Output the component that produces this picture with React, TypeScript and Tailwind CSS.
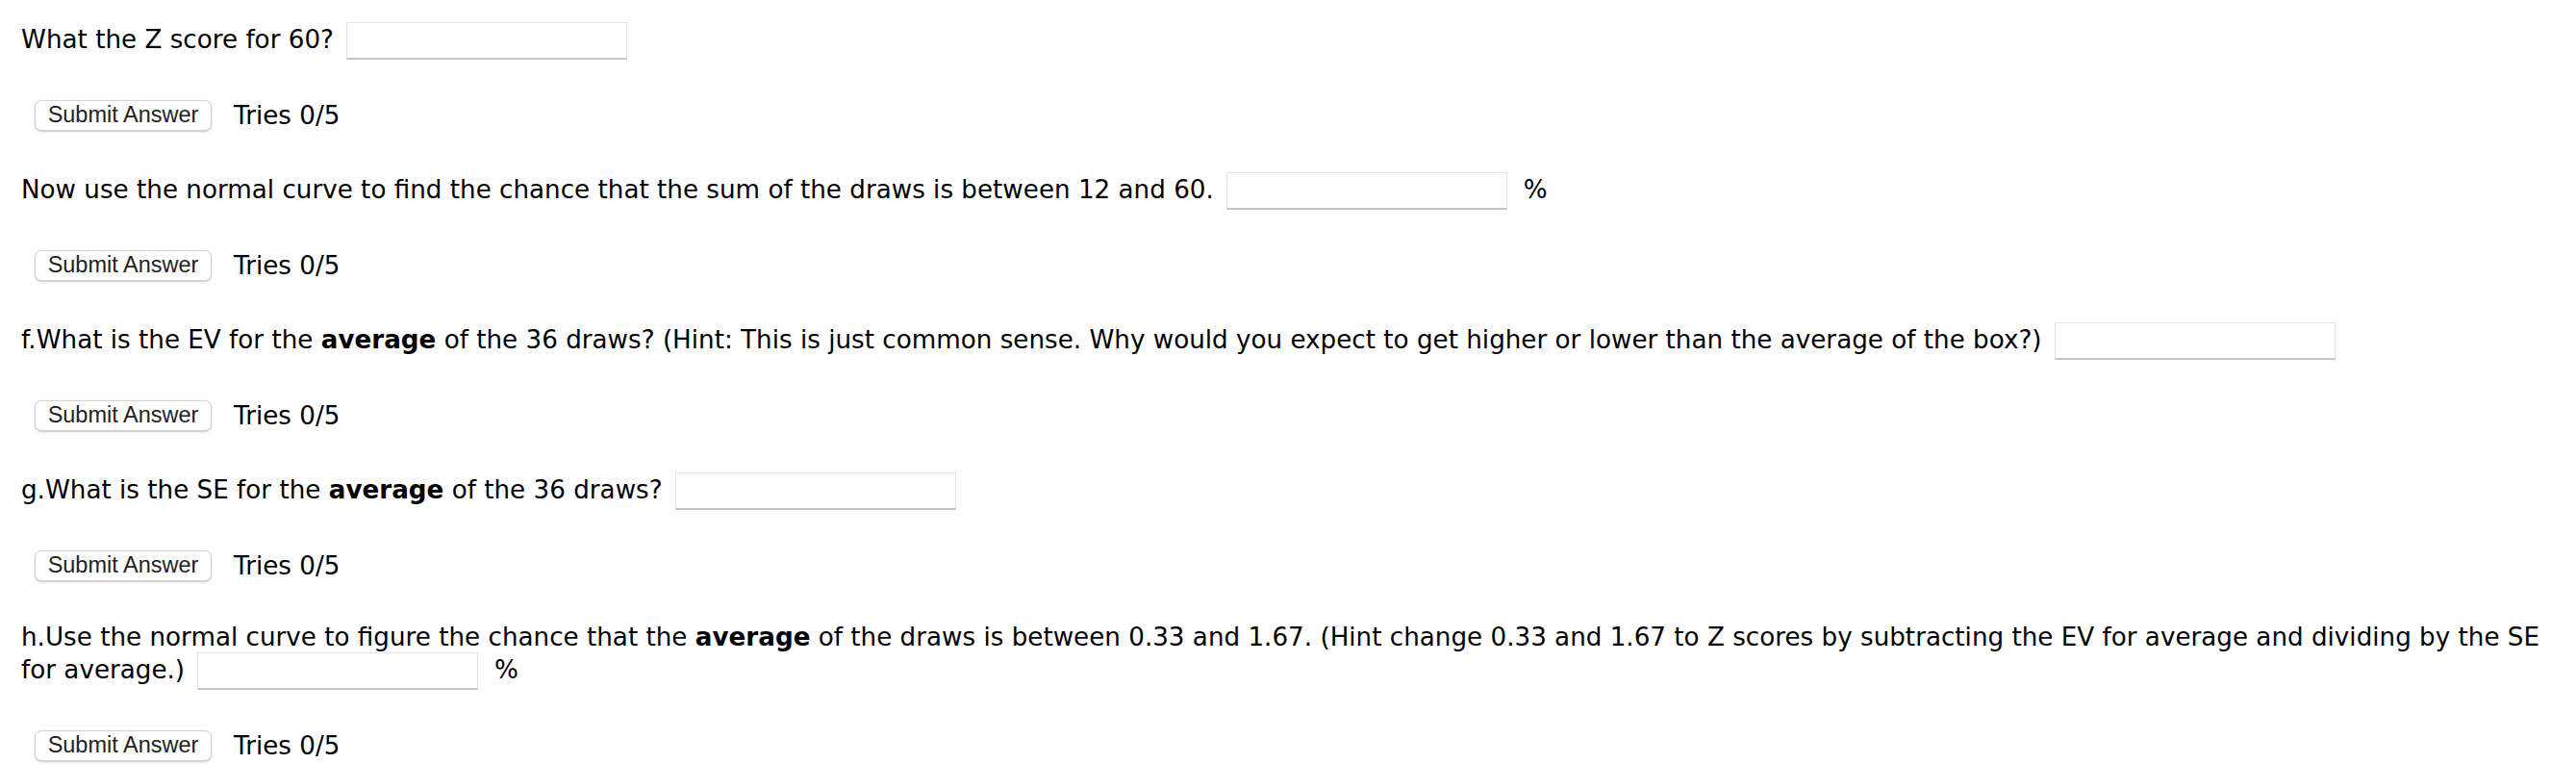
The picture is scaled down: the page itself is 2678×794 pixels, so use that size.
import React from "react";

function Answer({ className = "" }: { className?: string }) {
  return (
    <input
      type="text"
      className={
        "inline-block h-[39px] w-[292px] align-middle bg-white border border-[#e4e4e4] border-b-2 border-b-[#c4c4c4] outline-none " +
        className
      }
    />
  );
}

function SubmitRow({ mt = "mt-[40px]" }: { mt?: string }) {
  return (
    <div className={"flex h-[36px] items-center pl-[14px] " + mt}>
      <button
        type="button"
        className="h-[32px] w-[184px] rounded-[7px] border border-[#d2d2d2] bg-white text-[23.5px] leading-none text-[#222] shadow-[0_1px_2px_rgba(0,0,0,0.22)] font-['Liberation_Sans',Arial,sans-serif]"
      >
        Submit Answer
      </button>
      <span className="ml-[23px]">Tries 0/5</span>
    </div>
  );
}

export default function App() {
  return (
    <div className="min-h-[794px] w-full bg-white pl-[22px] pr-[12px] pt-[23px] text-[26.2px] leading-[31px] text-black font-['DejaVu_Sans',Verdana,sans-serif]">
      <div>
        What the Z score for 60?
        <Answer className="ml-[13px]" />
      </div>
      <SubmitRow />

      <div className="mt-[41px]">
        Now use the normal curve to find the chance that the sum of the draws is between 12 and 60.
        <Answer className="ml-[13px]" />
        <span className="ml-[17px]">%</span>
      </div>
      <SubmitRow />

      <div className="mt-[41px]">
        f.What is the EV for the <b className="font-bold">average</b> of the 36 draws? (Hint: This is just common sense. Why would you expect to get higher or lower than the average of the box?)
        <Answer className="ml-[13px]" />
      </div>
      <SubmitRow />

      <div className="mt-[41px]">
        g.What is the SE for the <b className="font-bold">average</b> of the 36 draws?
        <Answer className="ml-[13px]" />
      </div>
      <SubmitRow />

      <div className="mt-[41px]">
        h.Use the normal curve to figure the chance that the <b className="font-bold">average</b> of the draws is between 0.33 and 1.67. (Hint change 0.33 and 1.67 to Z scores by subtracting the EV for average and dividing by the SE for average.)
        <Answer className="ml-[13px]" />
        <span className="ml-[17px]">%</span>
      </div>
      <SubmitRow />
    </div>
  );
}
